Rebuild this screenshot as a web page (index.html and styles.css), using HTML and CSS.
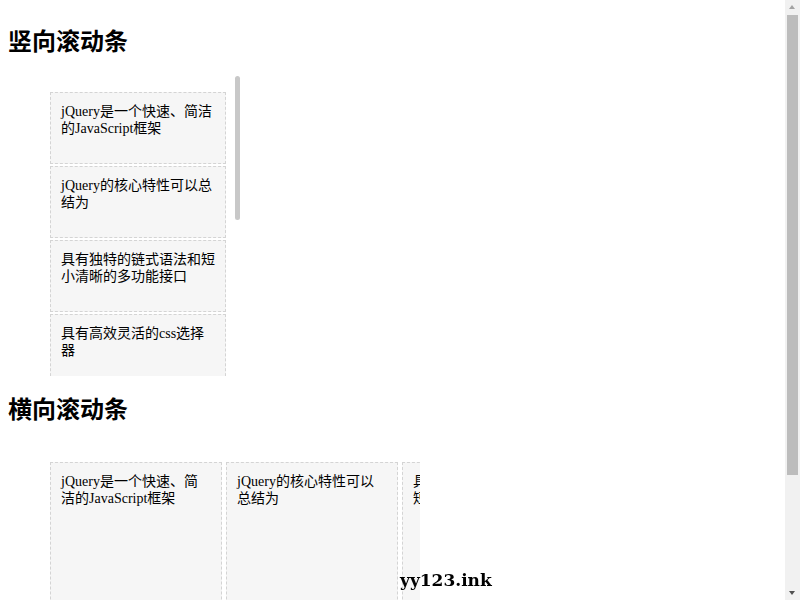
FILE: index.html
```html
<!DOCTYPE html>
<html lang="zh-CN">
<head>
<meta charset="utf-8">
<title>滚动条</title>
<link rel="stylesheet" href="styles.css">
</head>
<body>
<h2 class="title">竖向滚动条</h2>
<div class="vwrap">
  <div class="vbox">
    <ul class="list">
      <li class="item">jQuery是一个快速、简洁的JavaScript框架</li>
      <li class="item">jQuery的核心特性可以总结为</li>
      <li class="item">具有独特的链式语法和短小清晰的多功能接口</li>
      <li class="item">具有高效灵活的css选择器</li>
      <li class="item">并且可对CSS选择器进行扩展</li>
      <li class="item">拥有便捷的插件扩展机制和丰富的插件</li>
      <li class="item">jQuery兼容各种主流浏览器</li>
      <li class="item">如IE 6.0+、FF 1.5+、Safari 2.0+、Opera 9.0+等</li>
    </ul>
  </div>
  <div class="vthumb"></div>
</div>
<h2 class="title">横向滚动条</h2>
<div class="hbox">
  <ul class="hlist">
    <li class="hitem">jQuery是一个快速、简洁的JavaScript框架</li>
    <li class="hitem">jQuery的核心特性可以总结为</li>
    <li class="hitem">具有独特的链式语法和短小清晰的多功能接口</li>
    <li class="hitem">具有高效灵活的css选择器</li>
    <li class="hitem">并且可对CSS选择器进行扩展</li>
    <li class="hitem">拥有便捷的插件扩展机制和丰富的插件</li>
    <li class="hitem">jQuery兼容各种主流浏览器</li>
    <li class="hitem">如IE 6.0+、FF 1.5+、Safari 2.0+、Opera 9.0+等</li>
  </ul>
</div>
<div class="mark">yy123.ink</div>
<div class="pagebar">
  <div class="arrow-up"></div>
  <div class="pagethumb"></div>
  <div class="arrow-down"></div>
</div>
</body>
</html>
```
FILE: styles.css
```css
body {
  margin: 8px;
  display: flow-root;
  font-family: "Liberation Serif", "Noto Sans CJK SC", serif;
  color: #000;
}
.title {
  font-size: 24px;
  font-weight: bold;
  line-height: 28px;
  margin: 20px 0;
}
.vwrap {
  position: relative;
  width: 232px;
}
.vbox {
  width: 220px;
  height: 300px;
  overflow: hidden;
}
.vthumb {
  position: absolute;
  left: 227px;
  top: 0;
  width: 5px;
  height: 144px;
  background: #c8c8c8;
  border-radius: 3px;
}
.list {
  margin: 16px 0;
  padding: 0 0 0 40px;
  list-style: none;
}
.item {
  margin: 2px;
  height: 50px;
  padding: 10px;
  border: 1px dashed #d4d4d4;
  background: #f6f6f6;
  font-size: 14px;
  line-height: 17px;
}
.hbox {
  width: 412px;
  height: 290px;
  overflow: hidden;
}
.hlist {
  margin: 16px 0;
  padding: 0 0 0 40px;
  list-style: none;
  display: flex;
  width: max-content;
}
.hitem {
  flex: 0 0 auto;
  width: 150px;
  height: 230px;
  margin: 2px;
  padding: 10px;
  border: 1px dashed #d4d4d4;
  background: #f6f6f6;
  font-size: 14px;
  line-height: 17px;
}
.mark {
  position: fixed;
  left: 400px;
  bottom: 10px;
  font-family: "DejaVu Serif", serif;
  font-weight: 900;
  font-size: 17px;
  color: #000;
}
.pagebar {
  position: fixed;
  right: 0;
  top: 0;
  width: 15px;
  height: 100%;
  background: #f1f1f1;
}
.pagethumb {
  position: absolute;
  left: 2px;
  top: 15px;
  width: 11px;
  height: 460px;
  background: #bcbcbc;
}
.arrow-up {
  position: absolute;
  left: 4px;
  top: 5px;
  width: 0;
  height: 0;
  border-left: 3.5px solid transparent;
  border-right: 3.5px solid transparent;
  border-bottom: 4px solid #a3a3a3;
}
.arrow-down {
  position: absolute;
  left: 4px;
  bottom: 5px;
  width: 0;
  height: 0;
  border-left: 3.5px solid transparent;
  border-right: 3.5px solid transparent;
  border-top: 4px solid #505050;
}
```
